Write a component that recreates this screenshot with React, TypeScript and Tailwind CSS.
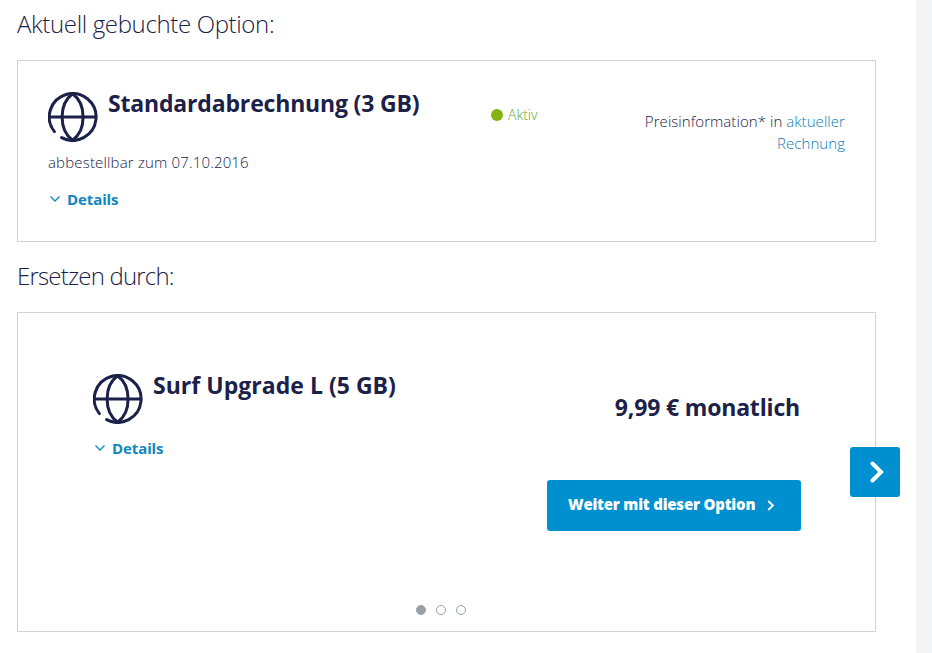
import { ReactNode, useState } from "react";
import clsx from "clsx";

function GlobeIcon() {
  return (
    <svg
      width="50"
      height="50"
      viewBox="0.4 0 50 50"
      fill="none"
      stroke="currentColor"
      strokeWidth="3"
      strokeLinecap="round"
      className="shrink-0"
    >
      <path d="M6.8 39.6A23.400 23.400 0 1 1 14 45.600" />
      <path d="M2 25h46" />
      <path d="M25 1.800C11 12 11 38 25 48.200C39 38 39 12 25 1.800Z" strokeLinejoin="round" />
    </svg>
  );
}

function DetailsLink() {
  return (
    <a href="#details" className="flex items-center text-[#0f86bd]">
      <svg width="10" height="6" viewBox="0 0 10 6" fill="none" stroke="currentColor" strokeWidth="1.3" className="mr-[7px]">
        <path d="M0.5 0.5L5 5L9.5 0.5" />
      </svg>
      <span className="text-[15px] leading-5 font-bold tracking-[-0.1px]">Details</span>
    </a>
  );
}

function Title({ children, className }: { children: ReactNode; className?: string }) {
  return (
    <h3 className={clsx("text-[23px] leading-8 font-bold whitespace-nowrap", className)}>
      {children}
    </h3>
  );
}

export default function App() {
  const [page, setPage] = useState(0);

  return (
    <div className="flex h-[653px] w-[932px] overflow-hidden bg-white font-['Open_Sans','Noto_Sans',sans-serif] text-[#1b2148]">
      <main className="w-[916px] pl-[17px]">
        <h2 className="h-[60px] pt-2 text-2xl leading-8 font-light tracking-[-0.35px] whitespace-nowrap">
          <span>Aktuell gebuchte Option:</span>
        </h2>

        {/* Current option */}
        <section className="flex h-[182px] w-[859px] justify-between border border-[#d0d4d6] px-[30px]">
          <div className="w-[443px] pt-[31px]">
            <div className="flex gap-[10px]">
              <GlobeIcon />
              <Title className="-mt-[5px] tracking-[-0.17px]">Standardabrechnung (3 GB)</Title>
            </div>
            <p className="mt-[10px] text-[15px] leading-5 font-light tracking-[0.17px] whitespace-nowrap">
              <span>abbestellbar zum 07.10.2016</span>
            </p>
            <div className="mt-[17px] pl-[2px]">
              <DetailsLink />
            </div>
          </div>
          <div className="mt-[44px] flex h-5 flex-1 items-center gap-[5px] self-start">
            <span className="size-3 rounded-full bg-[#84b414]" />
            <span className="text-sm leading-5 font-light text-[#689f2b]">Aktiv</span>
          </div>
          <p className="mt-[49px] w-[210px] text-right text-[15px] leading-[22px] font-light tracking-[0.06px]">
            <span>Preisinformation* in </span>
            <a href="#rechnung" className="text-[#0f7cb8]">aktueller Rechnung</a>
          </p>
        </section>

        <h2 className="h-[70px] pt-[18px] text-2xl leading-8 font-light tracking-[-0.8px] whitespace-nowrap">
          <span>Ersetzen durch:</span>
        </h2>

        {/* Replacement carousel */}
        <section className="relative flex h-[320px] w-[859px] flex-col border border-[#d0d4d6]">
          <div className="flex h-[292px] justify-between pr-[74px] pl-[75px]">
            <div className="pt-[61px]">
              <div className="flex gap-[10px]">
                <GlobeIcon />
                <Title className="-mt-[5px] tracking-[0.03px]">Surf Upgrade L (5 GB)</Title>
              </div>
              <div className="mt-[14px] pl-[2px]">
                <DetailsLink />
              </div>
            </div>
            <div className="flex flex-col items-end pt-[78px]">
              <Title className="mr-px tracking-[-0.17px]">9,99 € monatlich</Title>
              <button className="mt-[57px] flex h-[51px] w-[254px] items-center rounded-[3px] bg-[#0090d0] pl-[21px] text-white">
                <span className="-mt-[3px] text-[15px] leading-5 font-extrabold tracking-[-0.21px] whitespace-nowrap">
                  Weiter mit dieser Option
                </span>
                <svg width="8" height="11" viewBox="0 0 8 11" fill="none" stroke="currentColor" strokeWidth="1.8" className="ml-3">
                  <path d="M1.2 1L6 5.5L1.2 10" />
                </svg>
              </button>
            </div>
          </div>
          <div className="flex gap-[10px] pl-[398px]">
            {[0, 1, 2].map((i) => (
              <button
                key={i}
                aria-label={`${i + 1}`}
                onClick={() => setPage(i)}
                className={clsx("size-[10px] rounded-full border border-[#98a1a5]", i === page && "bg-[#98a1a5]")}
              />
            ))}
          </div>
          <button
            aria-label="Weiter"
            onClick={() => setPage((page + 1) % 3)}
            className="absolute top-[134px] -right-[25px] flex size-[50px] items-center justify-center rounded-[3px] bg-[#0090d0] text-white"
          >
            <svg width="14" height="22" viewBox="0 0 14 22" fill="none" stroke="currentColor" strokeWidth="4" strokeLinecap="round" className="ml-1">
              <path d="M2.5 2.5L11 11L2.5 19.5" />
            </svg>
          </button>
        </section>
      </main>
      <aside className="flex-1 bg-[#f3f4f6]" />
    </div>
  );
}
